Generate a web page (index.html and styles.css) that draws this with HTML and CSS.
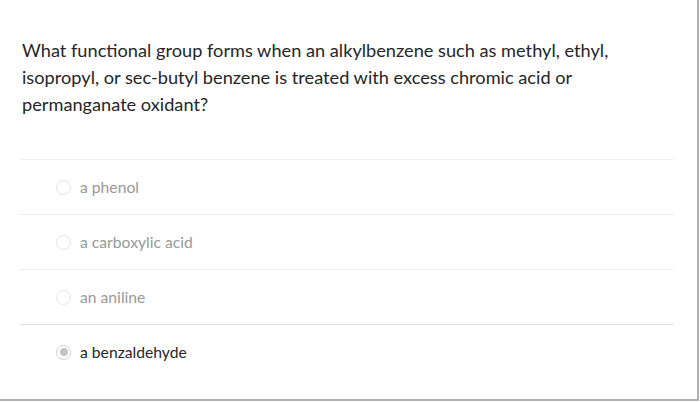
FILE: index.html
```html
<!DOCTYPE html>
<html>
<head>
<meta charset="utf-8">
<link rel="stylesheet" href="styles.css">
</head>
<body>
<div class="card">
  <p class="question">What functional group forms when an alkylbenzene such as methyl, ethyl, isopropyl, or sec-butyl benzene is treated with excess chromic acid or permanganate oxidant?</p>
  <ul class="options">
    <li class="option"><span class="radio"></span><span class="label">a phenol</span></li>
    <li class="option"><span class="radio"></span><span class="label">a carboxylic acid</span></li>
    <li class="option"><span class="radio"></span><span class="label">an aniline</span></li>
    <li class="option selected"><span class="radio"></span><span class="label">a benzaldehyde</span></li>
  </ul>
</div>
</body>
</html>
```
FILE: styles.css
```css
html, body {
  margin: 0;
  padding: 0;
  background: #fff;
}
.card {
  box-sizing: border-box;
  width: 699px;
  height: 401px;
  border-right: 2px solid #b0b0b0;
  border-bottom: 2px solid #b0b0b0;
  font-family: Lato, "Noto Sans", sans-serif;
  color: #2d3b45;
  padding: 37px 23px 0 20px;
}
.question {
  margin: 0 0 0 2px;
  font-size: 18.2px;
  line-height: 27px;
  color: #262626;
  width: 620px;
}
.options {
  list-style: none;
  margin: 41px 0 0 0;
  padding: 0;
  border-top: 1px solid #eeeeee;
}
.option {
  display: flex;
  align-items: center;
  height: 54px;
  border-bottom: 1px solid #eeeeee;
  padding-left: 36px;
  gap: 9px;
  font-size: 15.7px;
  color: #999;
}
.option:nth-child(3) {
  border-bottom-color: #e2e2e2;
}
.option:last-child {
  border-bottom: none;
}
.radio {
  box-sizing: border-box;
  width: 15px;
  height: 15px;
  border-radius: 50%;
  border: 1px solid #e4e4e4;
  background: #fff;
  position: relative;
}
.selected .radio {
  border-color: #d0d0d0;
}
.selected .radio::after {
  content: "";
  position: absolute;
  left: 2.5px;
  top: 2.5px;
  width: 8px;
  height: 8px;
  border-radius: 50%;
  background: #c4c4c4;
}
.selected .label {
  color: #262626;
}
```
